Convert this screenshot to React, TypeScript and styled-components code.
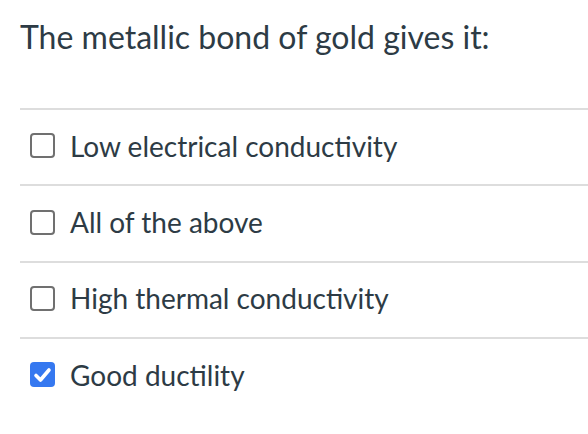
import React from "react";
import styled, { createGlobalStyle } from "styled-components";

const Global = createGlobalStyle`
  html, body { margin: 0; padding: 0; background: #ffffff; }
  body { font-family: Lato, "Noto Sans", sans-serif; color: #2d3b45; }
`;

const Page = styled.div`
  padding: 0 0 0 20px;
  display: flex;
  flex-direction: column;
`;

const Question = styled.h1`
  margin: 0;
  padding: 17px 0 0 0;
  height: 108px;
  box-sizing: border-box;
  font-size: 32px;
  font-weight: 400;
  line-height: 40px;
  color: #2d3b45;
`;

const List = styled.div`
  display: flex;
  flex-direction: column;
`;

const Row = styled.label`
  display: flex;
  align-items: center;
  gap: 15px;
  height: 76.4px;
  border-top: 2px solid #dddddd;
  box-sizing: border-box;
  padding: 0 0 3px 10px;
  font-size: 28px;
  cursor: pointer;
`;

const Box = styled.span<{ $checked: boolean }>`
  width: 25px;
  height: 25px;
  box-sizing: border-box;
  border-radius: 4px;
  border: ${(p) => (p.$checked ? "none" : "2px solid #707070")};
  background: ${(p) => (p.$checked ? "#3578f0" : "#ffffff")};
  display: flex;
  align-items: center;
  justify-content: center;
  flex-shrink: 0;
`;

const options = [
  { label: "Low electrical conductivity", checked: false },
  { label: "All of the above", checked: false },
  { label: "High thermal conductivity", checked: false },
  { label: "Good ductility", checked: true },
];

export default function App() {
  return (
    <>
      <Global />
      <Page>
        <Question>The metallic bond of gold gives it:</Question>
        <List>
          {options.map((o) => (
            <Row key={o.label}>
              <Box $checked={o.checked}>
                {o.checked && (
                  <svg width="25" height="25" viewBox="0 0 25 25">
                    <path d="M6 13.5 L10.5 18 L19 8" fill="none" stroke="#fff" strokeWidth="3.6" strokeLinecap="round" strokeLinejoin="round" />
                  </svg>
                )}
              </Box>
              <span>{o.label}</span>
            </Row>
          ))}
        </List>
      </Page>
    </>
  );
}
